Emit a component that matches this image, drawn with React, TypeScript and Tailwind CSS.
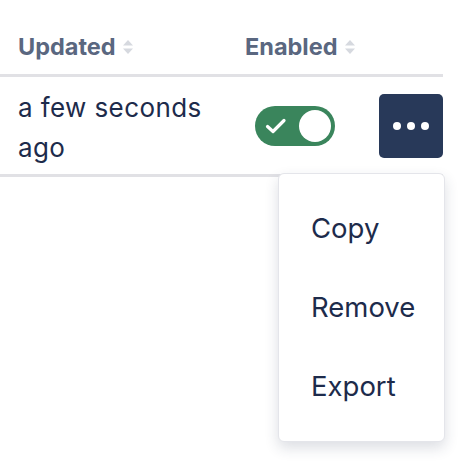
import React from 'react';

const SortIcon = () => (
  <svg width="12" height="16" viewBox="0 0 12 16" className="ml-[6px]">
    <path d="M6 1 L11 6.5 H1 Z" fill="#d6d9df" />
    <path d="M6 15 L11 9.5 H1 Z" fill="#d6d9df" />
  </svg>
);

const Toggle = () => (
  <div className="relative w-[80px] h-[40px] rounded-full bg-[#3a855c] flex items-center">
    <svg width="22" height="18" viewBox="0 0 22 18" className="ml-[10px]">
      <path d="M2.5 9.5 L8 14.5 L19 3.5" fill="none" stroke="white" strokeWidth="3.2" strokeLinecap="round" strokeLinejoin="round" />
    </svg>
    <div className="absolute right-[4px] top-[4px] w-[32px] h-[32px] rounded-full bg-white" />
  </div>
);

const menuItems = ['Copy', 'Remove', 'Export'];

export default function App() {
  return (
    <div className="relative w-[476px] h-[476px] bg-white font-['Inter',sans-serif] overflow-hidden">
      <div className="w-[443px]">
        <div className="flex items-center h-[77px] pt-[19px] border-b-[3px] border-[#e1e1e5] text-[23.5px] font-bold text-[#5a6780]">
          <div className="w-[245px] pl-[18px] flex items-center">
            Updated
            <SortIcon />
          </div>
          <div className="flex items-center">
            Enabled
            <SortIcon />
          </div>
        </div>
        <div className="flex items-center py-[6px] border-b-[3px] border-[#e1e1e5]">
          <div className="w-[256px] pl-[18px] pr-[40px] pt-[5px] text-[26px] leading-[40px] tracking-[0.4px] text-[#1d2b4b]">
            a few seconds ago
          </div>
          <div className="w-[124px]">
            <Toggle />
          </div>
          <button className="w-[64px] h-[64px] rounded-[5px] bg-[#283959] flex items-center justify-center gap-[6px]">
            <span className="w-[8px] h-[8px] rounded-full bg-white" />
            <span className="w-[8px] h-[8px] rounded-full bg-white" />
            <span className="w-[8px] h-[8px] rounded-full bg-white" />
          </button>
        </div>
      </div>
      <div className="absolute left-[278px] top-[173px] w-[167px] py-[15px] bg-white border border-[#e4e5ea] rounded-[6px] shadow-[0_6px_14px_rgba(40,50,80,0.16)]">
        {menuItems.map((item) => (
          <div key={item} className="h-[79px] flex items-center pl-[32px] text-[27.5px] text-[#1d2b4b]">
            {item}
          </div>
        ))}
      </div>
    </div>
  );
}
